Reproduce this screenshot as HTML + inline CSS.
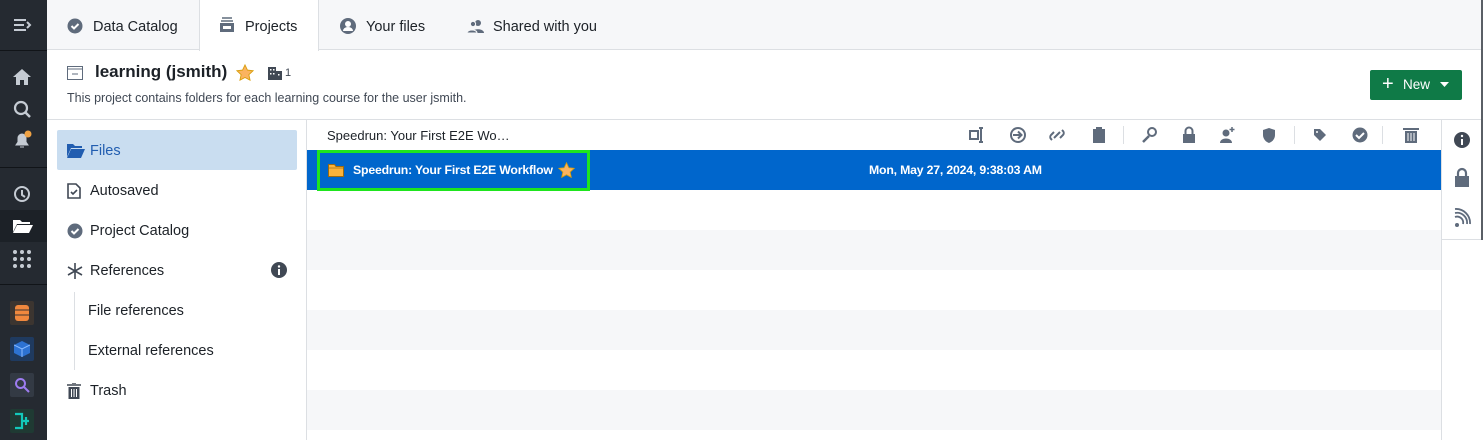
<!DOCTYPE html>
<html><head><meta charset="utf-8"><style>
*{box-sizing:border-box;margin:0;padding:0}
body{width:1483px;height:440px;overflow:hidden;font-family:"Liberation Sans",sans-serif;font-size:14px;color:#1c2127;background:#fff;position:relative}
.abs{position:absolute}
.side{left:0;top:0;width:47px;height:440px;background:#252a31}
.side svg{position:absolute;left:12px}
.tabs{left:47px;top:0;width:1436px;height:50px;background:#f6f7f9;border-bottom:1px solid #dcdfe3}
.tab{position:absolute;top:2px;height:50px;line-height:50px;font-size:14.5px;color:#1c2127}
.nav{left:47px;top:120px;width:260px;height:320px;border-right:1px solid #dcdfe3}
.ni{position:absolute;left:10px;width:240px;height:38px;line-height:42px;font-size:14.5px;padding-left:33px}
.ni svg{position:absolute;left:10px;top:13px}
.row{position:absolute;left:307px;width:1134px;height:40px}
</style></head><body>
<div class="abs side">
<div class="abs" style="left:0;top:50px;width:47px;height:1px;background:#111418"></div>
<div class="abs" style="left:0;top:167px;width:47px;height:1px;background:#111418"></div>
<div class="abs" style="left:0;top:210px;width:47px;height:32px;background:#1c2127"></div>
<div class="abs" style="left:0;top:284px;width:47px;height:1px;background:#111418"></div>
<svg style="top:16px" width="20" height="18" viewBox="0 0 20 18"><path d="M2 4h12M2 9h10M2 14h12M15 6l3 3-3 3" stroke="#c5cbd3" stroke-width="2" fill="none"/></svg>
<svg style="top:67px" width="20" height="20" viewBox="0 0 20 20"><path d="M10 2L1 10h3v8h4v-5h4v5h4v-8h3z" fill="#c5cbd3"/></svg>
<svg style="top:99px" width="20" height="20"><circle cx="9" cy="9" r="6" stroke="#c5cbd3" stroke-width="2.2" fill="none"/><path d="M13 13l5 5" stroke="#c5cbd3" stroke-width="2.5"/></svg>
<svg style="top:130px" width="22" height="20"><path d="M4 15h12l-2-3V8a4 4 0 0 0-8 0v4z M8 17h4" fill="#c5cbd3" stroke="#c5cbd3"/><circle cx="16" cy="4" r="3.5" fill="#f0a244"/></svg>
<svg style="top:184px" width="20" height="20"><circle cx="10" cy="10" r="7" stroke="#c5cbd3" stroke-width="2" fill="none"/><path d="M10 6v5l3 2" stroke="#c5cbd3" stroke-width="2" fill="none"/></svg>
<svg style="top:218px" width="22" height="16"><path d="M1 2h7l2 2h8v2H5L1 14z M5 7h16l-4 8H1z" fill="#fff"/></svg>
<svg style="top:249px" width="20" height="20"><g fill="#c5cbd3"><circle cx="3" cy="3" r="2"/><circle cx="10" cy="3" r="2"/><circle cx="17" cy="3" r="2"/><circle cx="3" cy="10" r="2"/><circle cx="10" cy="10" r="2"/><circle cx="17" cy="10" r="2"/><circle cx="3" cy="17" r="2"/><circle cx="10" cy="17" r="2"/><circle cx="17" cy="17" r="2"/></g></svg>
<div class="abs" style="left:10px;top:301px;width:24px;height:24px;background:#3c3530;border-radius:2px"></div>
<svg style="top:305px;left:15px" width="14" height="16"><rect x="0" y="0" width="14" height="16" rx="3" fill="#f0883e"/><path d="M0 5h14M0 10h14" stroke="#3c3530"/></svg>
<div class="abs" style="left:10px;top:337px;width:24px;height:24px;background:#1f3a5f;border-radius:2px"></div>
<svg style="top:341px;left:14px" width="16" height="16"><path d="M8 0l8 4v8l-8 4-8-4V4z" fill="#2d72d2"/><path d="M0 4l8 4 8-4M8 8v8" stroke="#8abbff" fill="none"/></svg>
<div class="abs" style="left:10px;top:373px;width:24px;height:24px;background:#333a44;border-radius:2px"></div>
<svg style="top:377px;left:14px" width="16" height="16"><circle cx="6.5" cy="6.5" r="4.5" stroke="#9d7cf0" stroke-width="2" fill="none"/><path d="M10 10l5 5" stroke="#9d7cf0" stroke-width="2"/></svg>
<div class="abs" style="left:10px;top:409px;width:24px;height:24px;background:#1f3a33;border-radius:2px"></div>
<svg style="top:412px;left:14px" width="16" height="18"><path d="M1 2h7v14H1M8 9h7M12 5v8" stroke="#13c9ba" stroke-width="2.2" fill="none"/></svg>
</div>

<div class="abs tabs">
<div class="abs" style="left:152px;top:0;width:120px;height:51px;background:#fff;border-left:1px solid #dcdfe3;border-right:1px solid #dcdfe3"></div>
<div class="tab" style="left:20px"><svg style="position:absolute;top:16px" width="16" height="16"><circle cx="8" cy="8" r="7.5" fill="#5f6b7c"/><path d="M4.5 8l2.5 2.5 4.5-4.5" stroke="#fff" stroke-width="2" fill="none"/></svg><span style="margin-left:26px">Data Catalog</span></div>
<div class="tab" style="left:172px"><svg style="position:absolute;top:15px" width="16" height="16"><path d="M3 1h10M2 4h12" stroke="#5f6b7c" stroke-width="1.5"/><rect x="1" y="6" width="14" height="9" fill="#5f6b7c"/><rect x="4" y="9" width="8" height="3" fill="#fff"/></svg><span style="margin-left:26px">Projects</span></div>
<div class="tab" style="left:293px"><svg style="position:absolute;top:16px" width="16" height="16"><circle cx="8" cy="8" r="8" fill="#5f6b7c"/><circle cx="8" cy="6" r="3" fill="#fff"/><path d="M3 13a5 4 0 0 1 10 0" fill="#fff"/></svg><span style="margin-left:26px">Your files</span></div>
<div class="tab" style="left:420px"><svg style="position:absolute;top:17px" width="18" height="14"><circle cx="11" cy="4" r="3" fill="#5f6b7c"/><path d="M5 14c0-5 12-5 12 0z" fill="#5f6b7c"/><circle cx="6" cy="5" r="2.6" fill="#5f6b7c" stroke="#f6f7f9"/><path d="M0 14c0-4 10-4 10 0z" fill="#5f6b7c" stroke="#f6f7f9"/></svg><span style="margin-left:26px">Shared with you</span></div>
</div>

<svg class="abs" style="left:67px;top:66px" width="16" height="14"><rect x="0.5" y="0.5" width="15" height="13" fill="#fff" stroke="#5f6b7c"/><path d="M0 3h16M5 8h6" stroke="#5f6b7c"/></svg>
<div class="abs" style="left:95px;top:62px;font-size:17px;font-weight:bold">learning (jsmith)</div>
<svg class="abs" style="left:236px;top:64px" width="18" height="18" viewBox="0 0 20 20"><path d="M10 1l2.7 5.8 6.3.7-4.7 4.3 1.3 6.2L10 15l-5.6 3 1.3-6.2L1 7.5l6.3-.7z" fill="#fbb360" stroke="#d99e0b"/></svg>
<svg class="abs" style="left:268px;top:67px" width="14" height="13"><path d="M0 0h8v13H0zM8 4h6v9H8z" fill="#404854"/><g fill="#fff"><rect x="2" y="2" width="1.5" height="1.5"/><rect x="5" y="2" width="1.5" height="1.5"/><rect x="2" y="6" width="1.5" height="1.5"/><rect x="5" y="6" width="1.5" height="1.5"/><rect x="10" y="7" width="1.5" height="1.5"/></g></svg>
<div class="abs" style="left:285px;top:67px;font-size:11px;color:#404854">1</div>
<div class="abs" style="left:67px;top:91px;font-size:12.5px;color:#404854">This project contains folders for each learning course for the user jsmith.</div>
<div class="abs" style="left:1370px;top:70px;width:92px;height:30px;background:#0f7a47;border-radius:2px;color:#fff;font-size:13.5px;line-height:30px"><span style="position:absolute;left:12px;top:-1px;font-size:20px;font-weight:300">+</span><span style="position:absolute;left:33px">New</span><svg style="position:absolute;left:70px;top:12px" width="9" height="6"><path d="M0 0h9L4.5 5z" fill="#fff"/></svg></div>
<div class="abs" style="left:47px;top:119px;width:1436px;height:1px;background:#dcdfe3"></div>

<div class="abs nav">
<div class="ni" style="top:10px;background:#c9ddf0;border-radius:2px;color:#215db0;height:40px"><svg width="18" height="16"><path d="M0 1h6l2 2h7v2H4L0 14z M4 6h14l-4 9H0z" fill="#215db0"/></svg>Files</div>
<div class="ni" style="top:50px"><svg width="14" height="16"><path d="M1 1h8l4 4v10H1z" fill="none" stroke="#404854" stroke-width="1.6"/><path d="M4 9l2 2 4-4" stroke="#404854" stroke-width="1.6" fill="none"/></svg>Autosaved</div>
<div class="ni" style="top:90px"><svg width="16" height="16"><circle cx="8" cy="8" r="7.5" fill="#5f6b7c"/><path d="M4.5 8l2.5 2.5 4.5-4.5" stroke="#fff" stroke-width="2" fill="none"/></svg>Project Catalog</div>
<div class="ni" style="top:130px"><svg width="16" height="16"><path d="M8 0v16M1 4l14 8M1 12l14-8" stroke="#404854" stroke-width="1.6"/></svg>References<svg style="left:214px;top:12px" width="16" height="16"><circle cx="8" cy="8" r="8" fill="#404854"/><rect x="7" y="7" width="2" height="6" fill="#fff"/><circle cx="8" cy="4.5" r="1.2" fill="#fff"/></svg></div>
<div class="abs" style="left:27px;top:172px;width:1px;height:78px;background:#dcdfe3"></div>
<div class="ni" style="top:170px;padding-left:31px">File references</div>
<div class="ni" style="top:210px;padding-left:31px">External references</div>
<div class="ni" style="top:250px"><svg width="14" height="16"><path d="M0 2h14M5 0h4" stroke="#404854" stroke-width="1.6"/><path d="M1.5 4h11v12h-11z" fill="#404854"/><path d="M4.5 6v8M7 6v8M9.5 6v8" stroke="#fff"/></svg>Trash</div>
</div>

<div class="abs" style="left:327px;top:128px;font-size:13px">Speedrun: Your First E2E Wo…</div>
<svg class="abs" style="left:968px;top:126px" width="460" height="18">
<g fill="#5f6b7c" stroke="#5f6b7c">
<path d="M2 5h8v8H2z" fill="none" stroke-width="2"/><path d="M13 2v14M11 2h4M11 16h4" stroke-width="2" fill="none"/>
<circle cx="50" cy="9" r="7" fill="none" stroke-width="2"/><path d="M45 9h8M50 5.5l3.5 3.5-3.5 3.5" fill="none" stroke-width="2"/>
<path d="M84 14l-1-1a3 3 0 0 1 0-4l3-3M94 4l1 1a3 3 0 0 1 0 4l-3 3M86 12l6-6" fill="none" stroke-width="2"/>
<rect x="125" y="3" width="12" height="14" stroke="none"/><rect x="128" y="1" width="6" height="3" stroke="none"/>
<path d="M175 16l6-6" stroke-width="2.5"/><circle cx="184" cy="6" r="4" fill="none" stroke-width="2"/>
<rect x="215" y="8" width="12" height="9" stroke="none"/><path d="M217.5 8V5a3.5 3.5 0 0 1 7 0v3" fill="none" stroke-width="2"/>
<circle cx="258" cy="7" r="3.5" stroke="none"/><path d="M252 17c0-6 12-6 12 0z" stroke="none"/><path d="M264 1v5M261.5 3.5h5" stroke-width="1.5"/>
<path d="M301 2l6 2v5c0 4-3 7-6 8-3-1-6-4-6-8V4z" stroke="none"/>
<path d="M346 3h6l6 6-6 6-6-6z" stroke="none"/>
<circle cx="392" cy="9" r="7.5" stroke="none"/>
<rect x="437" y="5" width="12" height="12" stroke="none"/><path d="M435 3h16" stroke-width="2"/>
</g>
<path d="M388 9l3 3 5-5" stroke="#fff" stroke-width="2" fill="none"/><path d="M440 7v8M443 7v8M446 7v8" stroke="#fff"/><circle cx="349" cy="6" r="1" fill="#fff"/>
</svg>
<div class="abs" style="left:1123px;top:126px;width:1px;height:18px;background:#dcdfe3"></div>
<div class="abs" style="left:1294px;top:126px;width:1px;height:18px;background:#dcdfe3"></div>
<div class="abs" style="left:1382px;top:126px;width:1px;height:18px;background:#dcdfe3"></div>

<div class="row" style="top:150px;background:#0066cc"></div>
<div class="row" style="top:230px;background:#f6f7f9"></div>
<div class="row" style="top:310px;background:#f6f7f9"></div>
<div class="row" style="top:390px;background:#f6f7f9"></div>
<div class="abs" style="left:317px;top:150px;width:273px;height:41px;border:3px solid #1ee51e"></div>
<svg class="abs" style="left:328px;top:164px" width="16" height="13"><path d="M0.5 0.5h6l1.5 2h7.5v10H0.5z" fill="#fbb33b" stroke="#9a6a10"/><path d="M0.5 4h15" stroke="#9a6a10" stroke-width="0.7"/></svg>
<div class="abs" style="left:353px;top:163px;font-size:12.3px;color:#fff;font-weight:bold;letter-spacing:-0.2px">Speedrun: Your First E2E Workflow</div>
<svg class="abs" style="left:558px;top:162px" width="17" height="17" viewBox="0 0 20 20"><path d="M10 1l2.7 5.8 6.3.7-4.7 4.3 1.3 6.2L10 15l-5.6 3 1.3-6.2L1 7.5l6.3-.7z" fill="#fbb360" stroke="#d99e0b"/></svg>
<div class="abs" style="left:869px;top:163px;font-size:12.3px;color:#fff;font-weight:bold;letter-spacing:-0.2px">Mon, May 27, 2024, 9:38:03 AM</div>

<div class="abs" style="left:1441px;top:120px;width:1px;height:320px;background:#dcdfe3"></div>
<div class="abs" style="left:1441px;top:239px;width:42px;height:1px;background:#dcdfe3"></div>
<div class="abs" style="left:1481px;top:0;width:2px;height:240px;background:#5a5f66"></div>
<svg class="abs" style="left:1453px;top:131px" width="18" height="100">
<circle cx="9" cy="9" r="8" fill="#404854"/><rect x="8" y="8" width="2" height="6" fill="#fff"/><circle cx="9" cy="5" r="1.2" fill="#fff"/>
<rect x="2" y="45" width="14" height="11" fill="#5f6b7c"/><path d="M5 45v-3a4 4 0 0 1 8 0v3" stroke="#5f6b7c" stroke-width="2.2" fill="none"/>
<circle cx="4" cy="94" r="2" fill="#5f6b7c"/><path d="M2 86a6 6 0 0 1 8 7M2 82a10 10 0 0 1 12 11M2 78a14 14 0 0 1 15 15" stroke="#5f6b7c" stroke-width="1.8" fill="none"/>
</svg>
</body></html>
